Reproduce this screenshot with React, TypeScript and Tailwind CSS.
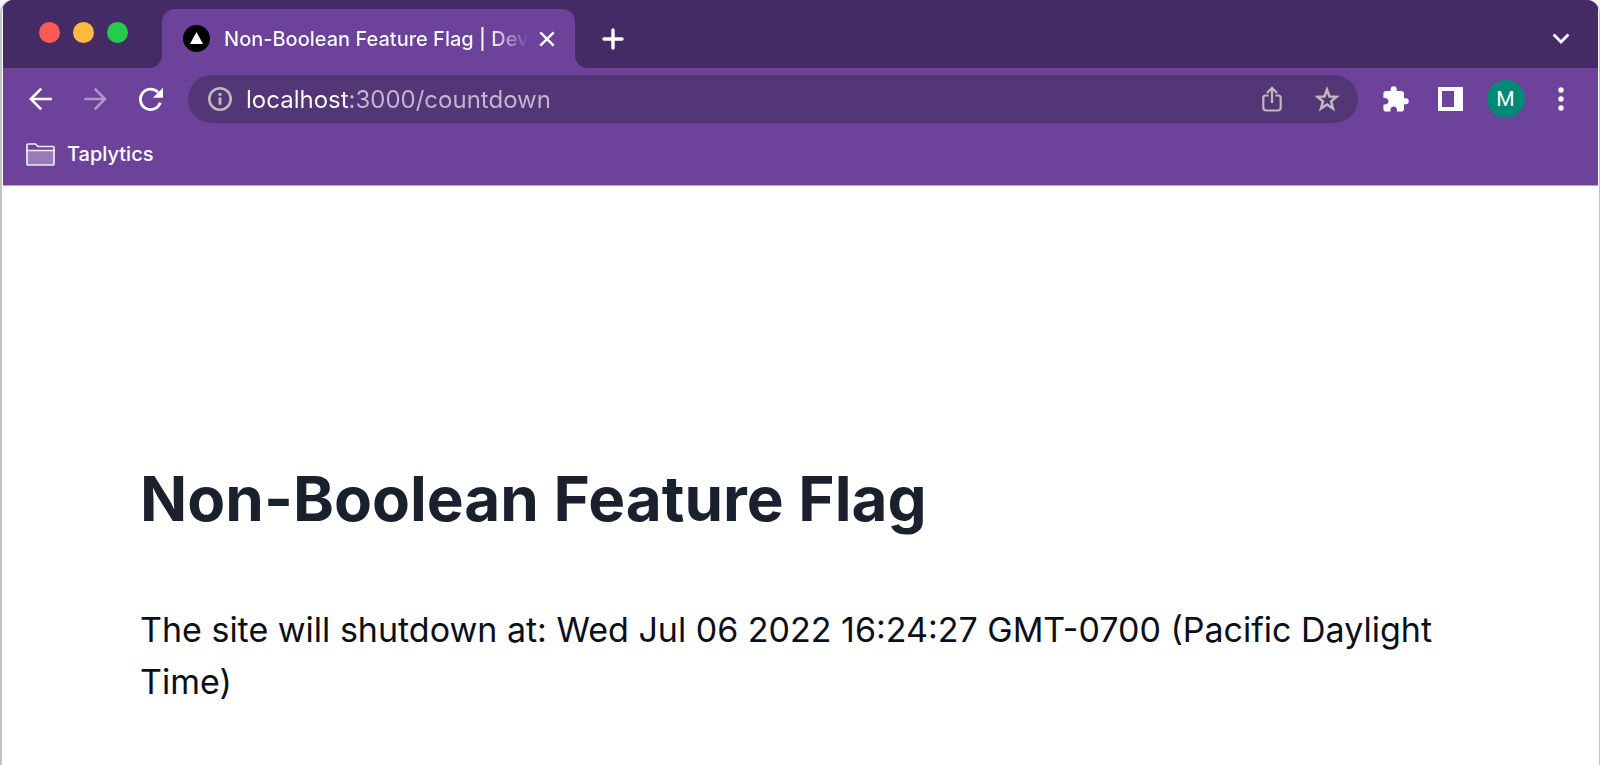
import { useState } from "react";
import { MdExtension } from "react-icons/md";

const toolbarButton =
  "flex h-12 w-[55px] shrink-0 items-center justify-center text-white";

const App = () => {
  const [url, setUrl] = useState("localhost:3000/countdown");

  return (
    <div className="min-h-screen bg-gray-100 font-['Inter',sans-serif]">
      <div className="flex min-h-screen flex-col overflow-hidden rounded-t-[13px] border-r border-l-2 border-[#c4c4c6] bg-white">
        <header className="mx-px border-b border-[#b5a1cc] bg-[#6c429b] text-white">
          {/* tab strip */}
          <div className="flex h-[68px]">
            <div className="flex w-[159px] shrink-0 items-start gap-[13px] rounded-br-[13px] bg-[#452b66] pt-[22px] pl-9">
              <button type="button" aria-label="Close window" className="size-[21px] rounded-full bg-[#ff5a56]" />
              <button type="button" aria-label="Minimize window" className="size-[21px] rounded-full bg-[#ffbb40]" />
              <button type="button" aria-label="Zoom window" className="size-[21px] rounded-full bg-[#26cb4d]" />
            </div>
            <div className="w-[413px] bg-[#452b66] pt-[9px]">
              <div className="flex h-full items-center rounded-t-[13px] bg-[#6c429b] pr-4 pl-[21px]">
                <svg viewBox="0 0 27 27" className="size-[27px] shrink-0">
                  <circle cx="13.5" cy="13.5" r="13.5" fill="#000" />
                  <path d="M13.5 7l6.5 12H7z" fill="#fff" />
                </svg>
                <span className="ml-[14px] bg-linear-to-r from-white from-87% to-transparent bg-clip-text text-[20px] leading-7 font-medium whitespace-nowrap text-transparent">
                  Non-Boolean Feature Flag | Dev
                </span>
                <button type="button" aria-label="Close tab" className="ml-auto flex size-6 items-center justify-center">
                  <svg viewBox="0 0 16 16" className="size-4" fill="none" stroke="currentColor" strokeWidth="2.4">
                    <path d="M1.3 1.3l13.4 13.4M14.7 1.3L1.3 14.7" />
                  </svg>
                </button>
              </div>
            </div>
            <div className="flex flex-1 items-center justify-between rounded-bl-[13px] bg-[#452b66] px-[10px] pt-[9px]">
              <button type="button" aria-label="New tab" className={toolbarButton}>
                <svg viewBox="0 0 22 22" className="size-[22px]" fill="none" stroke="currentColor" strokeWidth="3.4" strokeLinecap="round">
                  <path d="M11 2v18M2 11h18" />
                </svg>
              </button>
              <button type="button" aria-label="Search tabs" className={toolbarButton}>
                <svg viewBox="0 0 18 12" className="h-3 w-[18px]" fill="none" stroke="currentColor" strokeWidth="2.8">
                  <path d="M1.6 1.6L9 9l7.4-7.4" />
                </svg>
              </button>
            </div>
          </div>

          {/* toolbar */}
          <div className="flex items-center px-[10px] pt-[7px]">
            <button type="button" aria-label="Back" className={toolbarButton}>
              <svg viewBox="0 0 24 24" className="size-6" fill="none" stroke="currentColor" strokeWidth="2.6">
                <path d="M22.800 12H1.900M12.200 1.700L1.900 12l10.300 10.300" />
              </svg>
            </button>
            <button type="button" aria-label="Forward" disabled className={toolbarButton}>
              <svg viewBox="0 0 24 24" className="size-6 opacity-45" fill="none" stroke="currentColor" strokeWidth="2.6">
                <path d="M.2 12H21M10.700 1.700L21 12 10.700 22.300" />
              </svg>
            </button>
            <button type="button" aria-label="Reload" className={toolbarButton}>
              <svg viewBox="0 0 26 24" className="h-6 w-[26px]" fill="none" stroke="currentColor" strokeWidth="2.8">
                <path d="M22.300 15.600A10.200 10.200 0 1 1 20 5.300" />
                <path d="M25 .7v10.100H14.900z" fill="currentColor" stroke="none" />
              </svg>
            </button>
            <div className="mx-[10px] flex h-12 flex-1 items-center rounded-full bg-[#533676] pr-1 pl-[18px] text-[#bdb9bf]">
              <svg viewBox="0 0 28 28" className="size-7 shrink-0" fill="none" stroke="currentColor" strokeWidth="2.6">
                <circle cx="14" cy="14" r="10.700" />
                <path d="M14 12.500v7.200M14 8v2.800" strokeWidth="3" />
              </svg>
              <input
                type="text"
                aria-label="Address"
                value={url}
                onChange={(e) => setUrl(e.target.value)}
                className="ml-3 h-9 min-w-0 flex-1 bg-[linear-gradient(to_right,#fff_103px,#c3b8d0_103px)] bg-clip-text text-2xl text-transparent caret-white outline-none"
              />
              <button type="button" aria-label="Share" className="flex h-12 w-[55px] items-center justify-center">
                <svg viewBox="0 0 20 26" className="h-[26px] w-5" fill="none" stroke="currentColor" strokeWidth="2.2">
                  <path d="M6.500 9.500H3.700q-2.400 0-2.400 2.400v9.600q0 3 3 3h11.400q3 0 3-3v-9.600q0-2.400-2.400-2.400H13.500M10 17V2.300M5 7L10 1.800 15 7" />
                </svg>
              </button>
              <button type="button" aria-label="Bookmark this tab" className="flex h-12 w-[55px] items-center justify-center">
                <svg viewBox="0 0 26 26" className="size-[26px]" fill="none" stroke="currentColor" strokeWidth="2.5">
                  <path d="M13 3.600l2.500 6.900 7 .3-5.400 4.600 1.900 7.100-6-4.100-6 4.100 1.900-7.100-5.400-4.600 7-.3z" />
                </svg>
              </button>
            </div>
            <button type="button" aria-label="Extensions" className={toolbarButton}>
              <MdExtension className="size-[29px]" />
            </button>
            <button type="button" aria-label="Side panel" className={toolbarButton}>
              <svg viewBox="0 0 25 24" className="h-6 w-[25px]">
                <path d="M0 0h25v24H0zM4 4v16h12V4z" fill="currentColor" fillRule="evenodd" />
              </svg>
            </button>
            <button type="button" aria-label="Profile" className={toolbarButton}>
              <span className="flex size-[38px] items-center justify-center rounded-full bg-[#028876] font-['Roboto',sans-serif] text-[21px] leading-none">
                M
              </span>
            </button>
            <button type="button" aria-label="Menu" className={toolbarButton}>
              <svg viewBox="0 0 6 24" className="h-6 w-[6px]" fill="currentColor">
                <circle cx="3" cy="3" r="2.700" />
                <circle cx="3" cy="12" r="2.700" />
                <circle cx="3" cy="21" r="2.700" />
              </svg>
            </button>
          </div>

          {/* bookmarks bar */}
          <div className="flex h-[62px] items-center px-[23px]">
            <a href="#taplytics" className="flex items-center gap-3 text-[20px] leading-7 font-medium">
              <svg viewBox="0 0 29 23" className="h-[23px] w-[29px]" stroke="#f0eaf6" strokeWidth="1.700">
                <path d="M1 7.500h27V21q0 1-1 1H2q-1 0-1-1z" fill="#9a7bba" />
                <path d="M1 8.500V2q0-1 1-1h7.500l2.500 2.500h15q1 0 1 1v4" fill="none" />
              </svg>
              Taplytics
            </a>
          </div>
        </header>

        <main className="px-[138px] pt-[275px]">
          <h1 className="text-[62px] leading-[76px] font-bold text-[#1a202c]">
            Non-Boolean Feature Flag
          </h1>
          <p className="mt-[67px] text-[34px] leading-[52px] text-[#0b0f1a]">
            The site will shutdown at: Wed Jul 06 2022 16:24:27 GMT-0700 (Pacific
            Daylight Time)
          </p>
        </main>
      </div>
    </div>
  );
};

export default App;
